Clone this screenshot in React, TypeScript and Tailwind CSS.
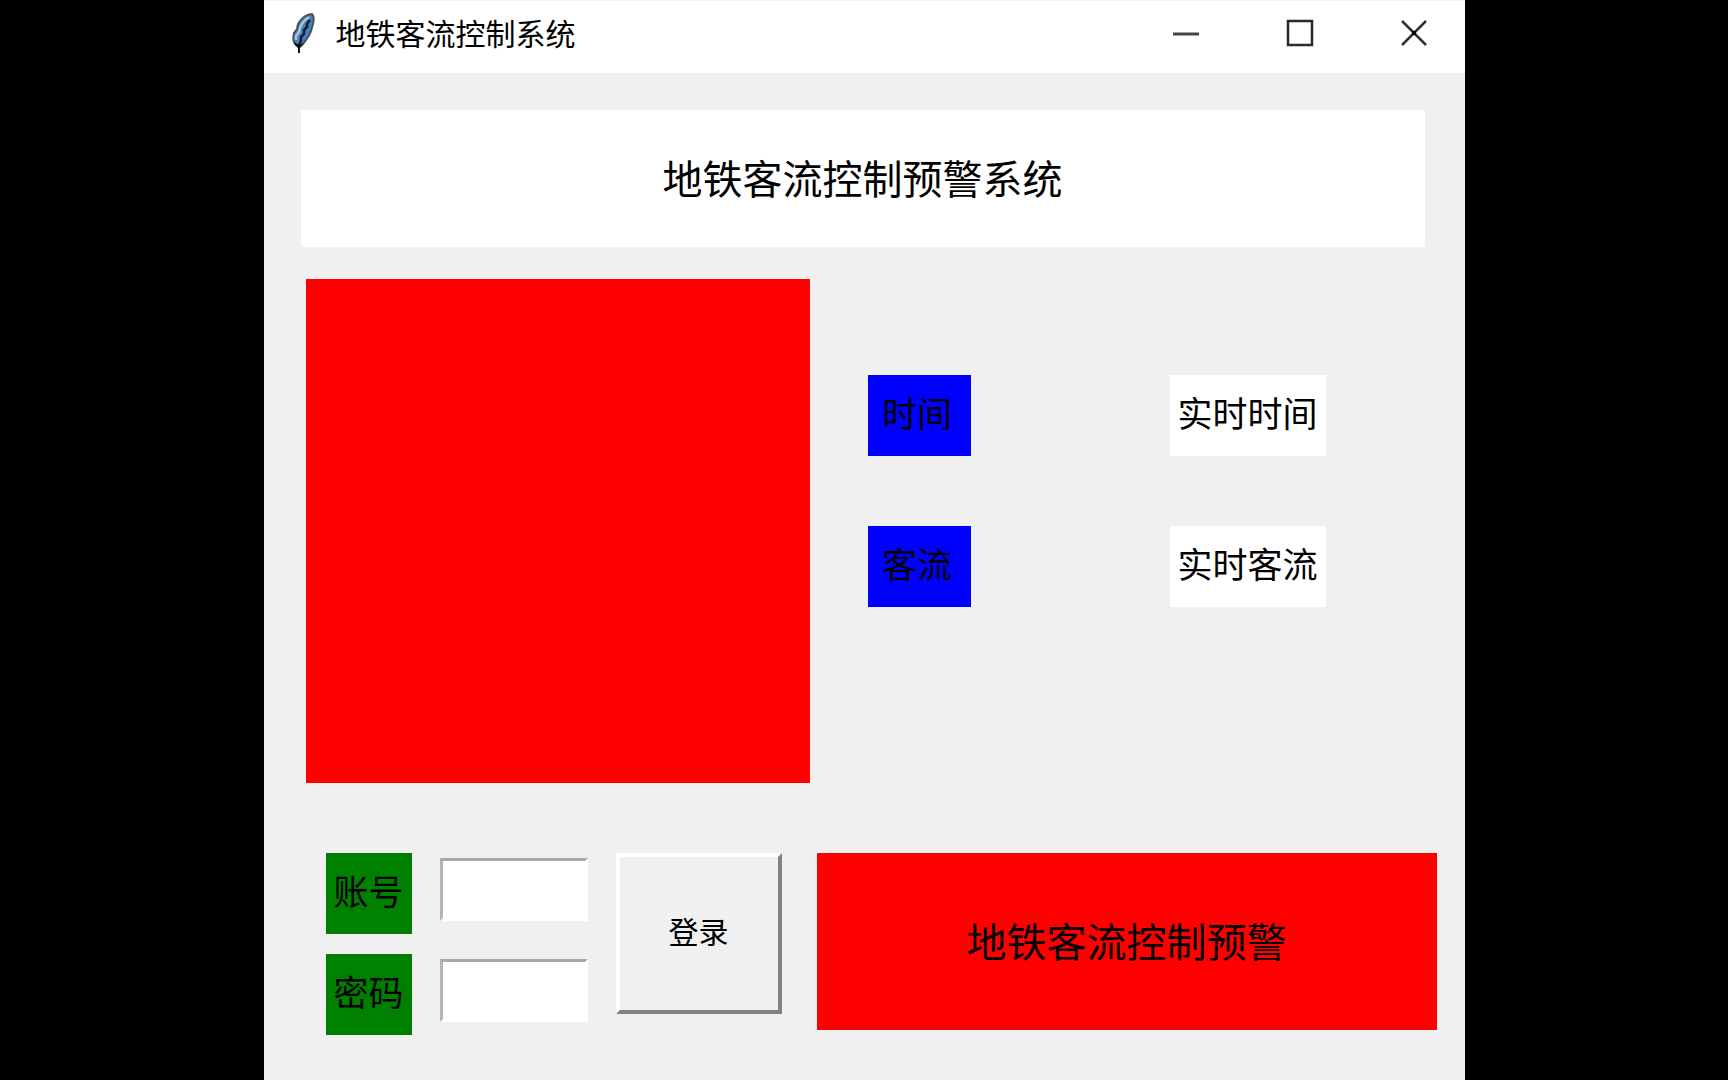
import type { ReactNode } from "react";

function Feather() {
  return (
    <svg viewBox="0 0 24 42" className="h-[42px] w-6" aria-hidden="true">
      <path
        d="M20 2 C15 2 9 6 6 12 L5 17 L2 21 C1 26 1 30 3 32 L7 35 L11 32 C14 28 18 23 19 19 L21 12 C22 8 22 4 20 2 Z"
        fill="#4a80bd"
        stroke="#4a5258"
        strokeWidth="2"
      />
      <path d="M17 5 C12 8 8 14 7 20 L4 24 V28" fill="none" stroke="#a9c6dc" strokeWidth="2.500" />
      <path
        d="M18 8 L15 12 V15 L12 18 V22 L9 25 V29 L7 33"
        fill="none"
        stroke="#15202c"
        strokeWidth="2.500"
      />
      <path d="M2 30 L5 32 H10 L12 30 L10 34 L8 36 V41 H6 V36 L3 33 Z" fill="#101418" />
    </svg>
  );
}

function TitleBar() {
  const control = "flex h-full w-[114px] items-center justify-center";
  return (
    <header className="flex h-[73px] items-center border-t border-[#f0f0f0] bg-white pb-2 pl-[28px]">
      <Feather />
      <span className="ml-5 pb-0.5 text-[30px] leading-10">地铁客流控制系统</span>
      <div className="-mr-1.5 ml-auto flex h-full">
        <button type="button" aria-label="最小化" className={control}>
          <svg viewBox="0 0 28 28" className="size-7" fill="none" stroke="#444" strokeWidth="3">
            <path d="M1 15H27" />
          </svg>
        </button>
        <button type="button" aria-label="最大化" className={control}>
          <svg viewBox="0 0 28 28" className="size-7" fill="none" stroke="#2a2a2a" strokeWidth="2.500">
            <path d="M2 2H26V26H2Z" />
          </svg>
        </button>
        <button type="button" aria-label="关闭" className={control}>
          <svg viewBox="0 0 28 28" className="size-7" fill="none" stroke="#333" strokeWidth="2.500">
            <path d="M2 2L26 26M26 2L2 26" />
            <path d="M12 14H16" stroke="#000" strokeWidth="4" />
          </svg>
        </button>
      </div>
    </header>
  );
}

function Reading({ label, children }: { label: string; children: ReactNode }) {
  return (
    <div className="flex items-center justify-between">
      <dt className="flex h-[81px] w-[103px] items-center justify-center bg-[#0000ff] pr-1 pb-2 text-[35px] leading-10">
        {label}
      </dt>
      <dd className="flex h-[81px] w-[156px] items-center justify-center bg-white pb-2 text-[35px] leading-10">
        {children}
      </dd>
    </div>
  );
}

function Field({ id, label, type }: { id: string; label: string; type: string }) {
  return (
    <div className="flex items-start gap-7">
      <label
        htmlFor={id}
        className="flex h-[81px] w-[86px] items-center justify-center bg-[#008000] pb-2 text-[35px] leading-10"
      >
        {label}
      </label>
      <input
        id={id}
        type={type}
        className="mt-[5px] h-[63px] w-[148px] border-3 border-t-[#a8a8a8] border-r-white border-b-white border-l-[#b4b4b4] bg-white px-1 text-[30px] outline-none"
      />
    </div>
  );
}

export default function App() {
  return (
    <div className="min-h-screen bg-black">
      <div className="mx-auto flex min-h-screen w-full max-w-[1201px] flex-col bg-[#f0f0f0] font-['Noto_Sans_CJK_SC',sans-serif] text-black">
        <TitleBar />
        <main className="pt-[37px] pr-10 pb-11 pl-[37px]">
          <h1 className="flex h-[137px] items-center justify-center bg-white pb-1 text-[40px] leading-[48px]">
            地铁客流控制预警系统
          </h1>
          <div className="mt-8 flex gap-[58px] pr-[99px] pl-[5px]">
            <div className="aspect-square w-[504px] bg-[#ff0000]" />
            <dl className="flex flex-1 flex-col gap-[70px] pt-24">
              <Reading label="时间">实时时间</Reading>
              <Reading label="客流">实时客流</Reading>
            </dl>
          </div>
          <div className="-mr-3 mt-[70px] flex items-start pl-[25px]">
            <form className="flex items-start gap-7" onSubmit={(e) => e.preventDefault()}>
              <div className="flex flex-col gap-5">
                <Field id="account" label="账号" type="text" />
                <Field id="password" label="密码" type="password" />
              </div>
              <button
                type="submit"
                className="h-[161px] w-[166px] border-4 border-t-white border-r-[#828282] border-b-[#828282] border-l-white bg-[#f0f0f0] pb-2 text-[30px] leading-10"
              >
                登录
              </button>
            </form>
            <p className="ml-[35px] flex h-[177px] flex-1 items-center justify-center bg-[#ff0000] pb-1 text-[40px] leading-[48px]">
              地铁客流控制预警
            </p>
          </div>
        </main>
      </div>
    </div>
  );
}
